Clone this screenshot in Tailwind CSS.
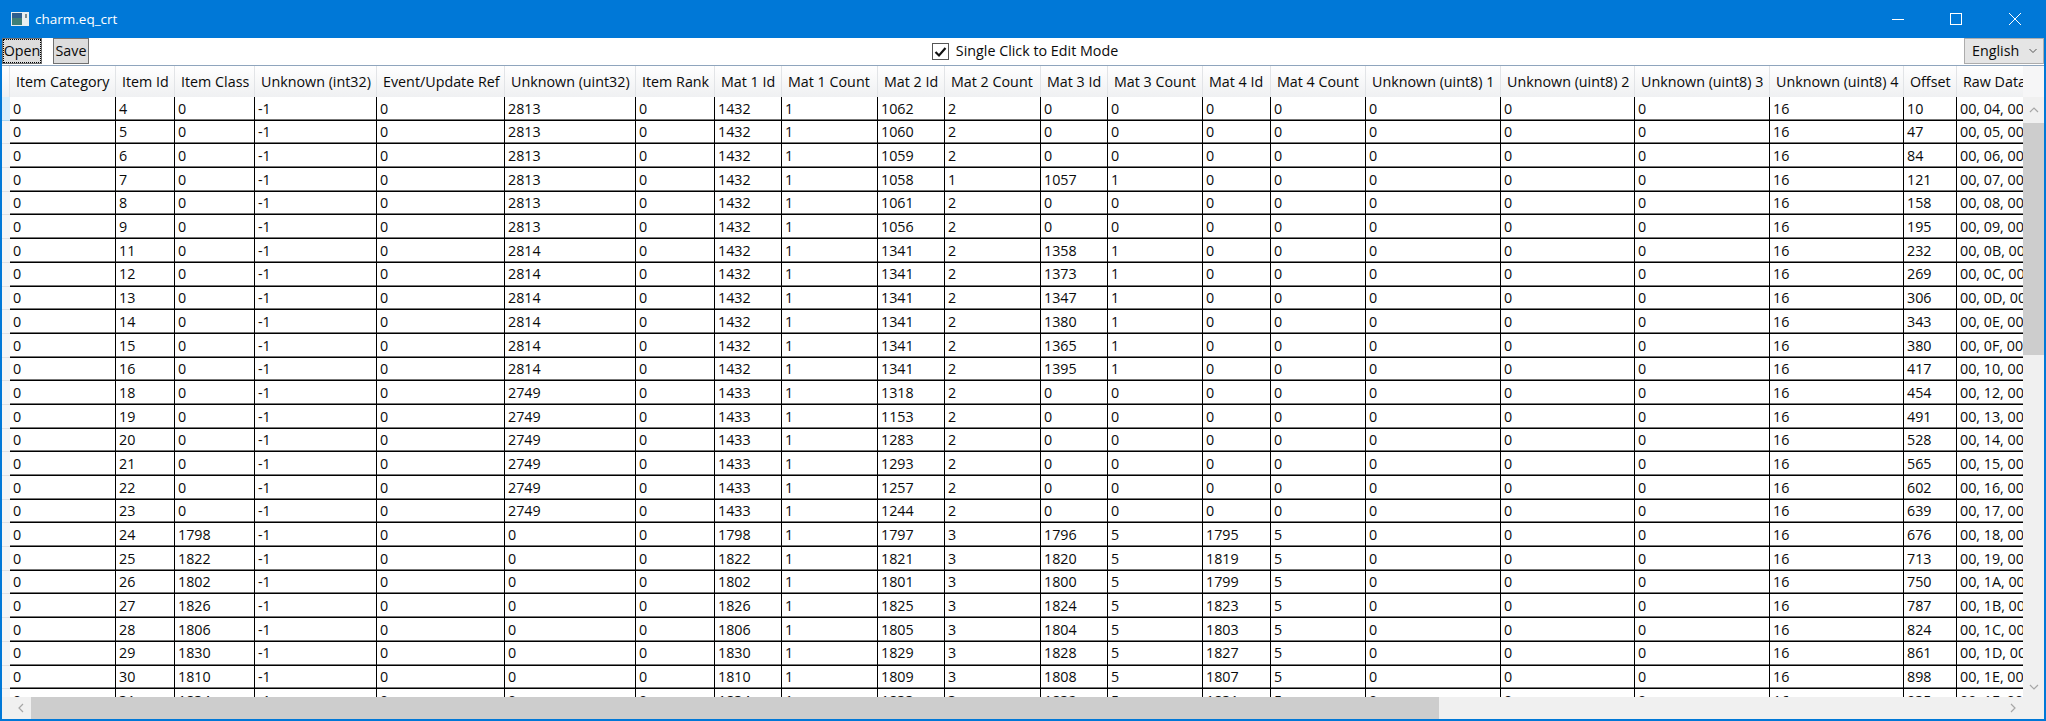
<!DOCTYPE html>
<html lang="en">
<head>
  <meta charset="UTF-8" />
  <title>charm.eq_crt</title>
  <script src="https://cdn.jsdelivr.net/npm/@tailwindcss/browser@4"></script>
</head>
<body class="w-[2046px] h-[721px] overflow-hidden bg-[#0078d7] px-[2px] pb-[2px] flex flex-col font-['Open_Sans','Liberation_Sans',sans-serif] text-[14.3px] text-[#0a0a0a]">
  <!-- title bar -->
  <div class="h-[38px] shrink-0 flex items-center text-white relative">
    <svg class="ml-[9px] w-[18px] h-[14px]" viewBox="0 0 18 14">
      <rect width="18" height="14" fill="#e8eef0" />
      <rect x="1" y="1" width="10" height="12" fill="#3f7f78" />
      <rect x="1" y="1" width="10" height="5" fill="#2f5f8f" />
      <rect x="14" y="2" width="2" height="4" fill="#7a8a90" />
    </svg>
    <span class="ml-[6px] text-[13.5px]">charm.eq_crt</span>
    <div class="ml-auto flex items-center">
      <svg class="w-[58px] h-[14px]" viewBox="0 0 58 14"><path d="M17 7.5h12" stroke="#fff" stroke-width="1" /></svg>
      <svg class="w-[59px] h-[14px]" viewBox="0 0 59 14"><rect x="17.5" y="1.5" width="11" height="11" fill="none" stroke="#fff" /></svg>
      <svg class="w-[52px] h-[14px]" viewBox="0 0 52 14"><path d="M17 1l12 12M29 1L17 13" stroke="#fff" stroke-width="1" fill="none" /></svg>
    </div>
  </div>

  <div class="flex-1 min-h-0 bg-white flex flex-col">
    <!-- toolbar -->
    <div class="h-[28px] shrink-0 flex border-b border-[#8fa5bd] pb-[1px]">
      <div class="w-[400px] flex gap-[11px]">
        <button class="w-[40px] h-[26px] bg-[#dddddd] border border-[#707070] outline-1 outline-dotted outline-black -outline-offset-2">Open</button>
        <button class="w-[36px] h-[26px] bg-[#dddddd] border border-[#707070]">Save</button>
      </div>
      <label class="flex-1 flex items-center justify-center gap-[7px] pl-[4px]">
        <span class="w-[17px] h-[17px] bg-white border border-[#555] flex items-center justify-center">
          <svg class="w-[13px] h-[13px]" viewBox="0 0 13 13"><path d="M1.5 7l3.5 3.5L11.5 3" stroke="#111" stroke-width="2.2" fill="none" /></svg>
        </span>
        <span>Single Click to Edit Mode</span>
      </label>
      <div class="w-[400px] flex justify-end">
        <div class="w-[80px] h-[26px] bg-[#e5e5e5] border border-[#acacac] flex items-center pl-[7px] justify-between pr-[6px]">
          <span>English</span>
          <svg class="w-[8px] h-[6px]" viewBox="0 0 8 6"><path d="M0.5 1l3.5 3.5L7.5 1" stroke="#555" fill="none" /></svg>
        </div>
      </div>
    </div>

    <!-- data grid -->
    <div class="flex-1 min-h-0 flex">
      <div class="w-[2021px] overflow-hidden">
        <table class="table-fixed w-[2155px] border-separate border-spacing-0 whitespace-nowrap [&_th]:h-[31px] [&_th]:font-normal [&_th]:text-left [&_th]:pl-[6px] [&_th]:overflow-hidden [&_th]:border-r [&_th]:border-[#e2e4e7] [&_th]:bg-linear-to-b [&_th]:from-white [&_th]:to-[#eff0f2] [&_tr]:h-[23.7px] [&_td]:pl-[3px] [&_td]:py-0 [&_td]:overflow-hidden [&_td]:border-r [&_td]:border-b [&_td]:border-black [&_td]:shadow-[inset_0_-1px_0_#777] [&_td:first-child]:p-0 [&_td:first-child]:bg-[#f4f5f6] [&_td:first-child]:border-r-0 [&_td:first-child]:border-[#dfe1e4] [&_td:first-child]:shadow-none">
          <colgroup>
            <col class="w-[8px]" /><col class="w-[106px]" /><col class="w-[59px]" /><col class="w-[80px]" /><col class="w-[122px]" /><col class="w-[128px]" /><col class="w-[131px]" /><col class="w-[79px]" /><col class="w-[67px]" /><col class="w-[96px]" /><col class="w-[67px]" /><col class="w-[96px]" /><col class="w-[67px]" /><col class="w-[95px]" /><col class="w-[68px]" /><col class="w-[95px]" /><col class="w-[135px]" /><col class="w-[134px]" /><col class="w-[135px]" /><col class="w-[134px]" /><col class="w-[53px]" /><col class="w-[200px]" />
          </colgroup>
          <thead>
            <tr><th></th><th>Item Category</th><th>Item Id</th><th>Item Class</th><th>Unknown (int32)</th><th>Event/Update Ref</th><th>Unknown (uint32)</th><th>Item Rank</th><th>Mat 1 Id</th><th>Mat 1 Count</th><th>Mat 2 Id</th><th>Mat 2 Count</th><th>Mat 3 Id</th><th>Mat 3 Count</th><th>Mat 4 Id</th><th>Mat 4 Count</th><th>Unknown (uint8) 1</th><th>Unknown (uint8) 2</th><th>Unknown (uint8) 3</th><th>Unknown (uint8) 4</th><th>Offset</th><th>Raw Data</th></tr>
          </thead>
          <tbody>
            <tr><td class="!bg-[#d9eefb] !border-[#a6d4f2]"></td><td>0</td><td>4</td><td>0</td><td>-1</td><td>0</td><td>2813</td><td>0</td><td>1432</td><td>1</td><td>1062</td><td>2</td><td>0</td><td>0</td><td>0</td><td>0</td><td>0</td><td>0</td><td>0</td><td>16</td><td>10</td><td>00, 04, 00</td></tr>
            <tr><td></td><td>0</td><td>5</td><td>0</td><td>-1</td><td>0</td><td>2813</td><td>0</td><td>1432</td><td>1</td><td>1060</td><td>2</td><td>0</td><td>0</td><td>0</td><td>0</td><td>0</td><td>0</td><td>0</td><td>16</td><td>47</td><td>00, 05, 00</td></tr>
            <tr><td></td><td>0</td><td>6</td><td>0</td><td>-1</td><td>0</td><td>2813</td><td>0</td><td>1432</td><td>1</td><td>1059</td><td>2</td><td>0</td><td>0</td><td>0</td><td>0</td><td>0</td><td>0</td><td>0</td><td>16</td><td>84</td><td>00, 06, 00</td></tr>
            <tr><td></td><td>0</td><td>7</td><td>0</td><td>-1</td><td>0</td><td>2813</td><td>0</td><td>1432</td><td>1</td><td>1058</td><td>1</td><td>1057</td><td>1</td><td>0</td><td>0</td><td>0</td><td>0</td><td>0</td><td>16</td><td>121</td><td>00, 07, 00</td></tr>
            <tr><td></td><td>0</td><td>8</td><td>0</td><td>-1</td><td>0</td><td>2813</td><td>0</td><td>1432</td><td>1</td><td>1061</td><td>2</td><td>0</td><td>0</td><td>0</td><td>0</td><td>0</td><td>0</td><td>0</td><td>16</td><td>158</td><td>00, 08, 00</td></tr>
            <tr><td></td><td>0</td><td>9</td><td>0</td><td>-1</td><td>0</td><td>2813</td><td>0</td><td>1432</td><td>1</td><td>1056</td><td>2</td><td>0</td><td>0</td><td>0</td><td>0</td><td>0</td><td>0</td><td>0</td><td>16</td><td>195</td><td>00, 09, 00</td></tr>
            <tr><td></td><td>0</td><td>11</td><td>0</td><td>-1</td><td>0</td><td>2814</td><td>0</td><td>1432</td><td>1</td><td>1341</td><td>2</td><td>1358</td><td>1</td><td>0</td><td>0</td><td>0</td><td>0</td><td>0</td><td>16</td><td>232</td><td>00, 0B, 00</td></tr>
            <tr><td></td><td>0</td><td>12</td><td>0</td><td>-1</td><td>0</td><td>2814</td><td>0</td><td>1432</td><td>1</td><td>1341</td><td>2</td><td>1373</td><td>1</td><td>0</td><td>0</td><td>0</td><td>0</td><td>0</td><td>16</td><td>269</td><td>00, 0C, 00</td></tr>
            <tr><td></td><td>0</td><td>13</td><td>0</td><td>-1</td><td>0</td><td>2814</td><td>0</td><td>1432</td><td>1</td><td>1341</td><td>2</td><td>1347</td><td>1</td><td>0</td><td>0</td><td>0</td><td>0</td><td>0</td><td>16</td><td>306</td><td>00, 0D, 00</td></tr>
            <tr><td></td><td>0</td><td>14</td><td>0</td><td>-1</td><td>0</td><td>2814</td><td>0</td><td>1432</td><td>1</td><td>1341</td><td>2</td><td>1380</td><td>1</td><td>0</td><td>0</td><td>0</td><td>0</td><td>0</td><td>16</td><td>343</td><td>00, 0E, 00</td></tr>
            <tr><td></td><td>0</td><td>15</td><td>0</td><td>-1</td><td>0</td><td>2814</td><td>0</td><td>1432</td><td>1</td><td>1341</td><td>2</td><td>1365</td><td>1</td><td>0</td><td>0</td><td>0</td><td>0</td><td>0</td><td>16</td><td>380</td><td>00, 0F, 00</td></tr>
            <tr><td></td><td>0</td><td>16</td><td>0</td><td>-1</td><td>0</td><td>2814</td><td>0</td><td>1432</td><td>1</td><td>1341</td><td>2</td><td>1395</td><td>1</td><td>0</td><td>0</td><td>0</td><td>0</td><td>0</td><td>16</td><td>417</td><td>00, 10, 00</td></tr>
            <tr><td></td><td>0</td><td>18</td><td>0</td><td>-1</td><td>0</td><td>2749</td><td>0</td><td>1433</td><td>1</td><td>1318</td><td>2</td><td>0</td><td>0</td><td>0</td><td>0</td><td>0</td><td>0</td><td>0</td><td>16</td><td>454</td><td>00, 12, 00</td></tr>
            <tr><td></td><td>0</td><td>19</td><td>0</td><td>-1</td><td>0</td><td>2749</td><td>0</td><td>1433</td><td>1</td><td>1153</td><td>2</td><td>0</td><td>0</td><td>0</td><td>0</td><td>0</td><td>0</td><td>0</td><td>16</td><td>491</td><td>00, 13, 00</td></tr>
            <tr><td></td><td>0</td><td>20</td><td>0</td><td>-1</td><td>0</td><td>2749</td><td>0</td><td>1433</td><td>1</td><td>1283</td><td>2</td><td>0</td><td>0</td><td>0</td><td>0</td><td>0</td><td>0</td><td>0</td><td>16</td><td>528</td><td>00, 14, 00</td></tr>
            <tr><td></td><td>0</td><td>21</td><td>0</td><td>-1</td><td>0</td><td>2749</td><td>0</td><td>1433</td><td>1</td><td>1293</td><td>2</td><td>0</td><td>0</td><td>0</td><td>0</td><td>0</td><td>0</td><td>0</td><td>16</td><td>565</td><td>00, 15, 00</td></tr>
            <tr><td></td><td>0</td><td>22</td><td>0</td><td>-1</td><td>0</td><td>2749</td><td>0</td><td>1433</td><td>1</td><td>1257</td><td>2</td><td>0</td><td>0</td><td>0</td><td>0</td><td>0</td><td>0</td><td>0</td><td>16</td><td>602</td><td>00, 16, 00</td></tr>
            <tr><td></td><td>0</td><td>23</td><td>0</td><td>-1</td><td>0</td><td>2749</td><td>0</td><td>1433</td><td>1</td><td>1244</td><td>2</td><td>0</td><td>0</td><td>0</td><td>0</td><td>0</td><td>0</td><td>0</td><td>16</td><td>639</td><td>00, 17, 00</td></tr>
            <tr><td></td><td>0</td><td>24</td><td>1798</td><td>-1</td><td>0</td><td>0</td><td>0</td><td>1798</td><td>1</td><td>1797</td><td>3</td><td>1796</td><td>5</td><td>1795</td><td>5</td><td>0</td><td>0</td><td>0</td><td>16</td><td>676</td><td>00, 18, 00</td></tr>
            <tr><td></td><td>0</td><td>25</td><td>1822</td><td>-1</td><td>0</td><td>0</td><td>0</td><td>1822</td><td>1</td><td>1821</td><td>3</td><td>1820</td><td>5</td><td>1819</td><td>5</td><td>0</td><td>0</td><td>0</td><td>16</td><td>713</td><td>00, 19, 00</td></tr>
            <tr><td></td><td>0</td><td>26</td><td>1802</td><td>-1</td><td>0</td><td>0</td><td>0</td><td>1802</td><td>1</td><td>1801</td><td>3</td><td>1800</td><td>5</td><td>1799</td><td>5</td><td>0</td><td>0</td><td>0</td><td>16</td><td>750</td><td>00, 1A, 00</td></tr>
            <tr><td></td><td>0</td><td>27</td><td>1826</td><td>-1</td><td>0</td><td>0</td><td>0</td><td>1826</td><td>1</td><td>1825</td><td>3</td><td>1824</td><td>5</td><td>1823</td><td>5</td><td>0</td><td>0</td><td>0</td><td>16</td><td>787</td><td>00, 1B, 00</td></tr>
            <tr><td></td><td>0</td><td>28</td><td>1806</td><td>-1</td><td>0</td><td>0</td><td>0</td><td>1806</td><td>1</td><td>1805</td><td>3</td><td>1804</td><td>5</td><td>1803</td><td>5</td><td>0</td><td>0</td><td>0</td><td>16</td><td>824</td><td>00, 1C, 00</td></tr>
            <tr><td></td><td>0</td><td>29</td><td>1830</td><td>-1</td><td>0</td><td>0</td><td>0</td><td>1830</td><td>1</td><td>1829</td><td>3</td><td>1828</td><td>5</td><td>1827</td><td>5</td><td>0</td><td>0</td><td>0</td><td>16</td><td>861</td><td>00, 1D, 00</td></tr>
            <tr><td></td><td>0</td><td>30</td><td>1810</td><td>-1</td><td>0</td><td>0</td><td>0</td><td>1810</td><td>1</td><td>1809</td><td>3</td><td>1808</td><td>5</td><td>1807</td><td>5</td><td>0</td><td>0</td><td>0</td><td>16</td><td>898</td><td>00, 1E, 00</td></tr>
            <tr><td></td><td>0</td><td>31</td><td>1834</td><td>-1</td><td>0</td><td>0</td><td>0</td><td>1834</td><td>1</td><td>1833</td><td>3</td><td>1832</td><td>5</td><td>1831</td><td>5</td><td>0</td><td>0</td><td>0</td><td>16</td><td>935</td><td>00, 1F, 00</td></tr>
          </tbody>
        </table>
      </div>
      <!-- vertical scrollbar -->
      <div class="w-[21px] flex flex-col bg-[#f0f0f0]">
        <div class="h-[31px] bg-[#f6f6f7]"></div>
        <div class="h-[26px] flex items-center justify-center">
          <svg class="w-[10px] h-[6px]" viewBox="0 0 10 6"><path d="M1 5l4-4 4 4" stroke="#a6a6a6" stroke-width="1.2" fill="none" /></svg>
        </div>
        <div class="h-[232px] bg-[#cdcdcd]"></div>
        <div class="mt-auto h-[21px] flex items-center justify-center">
          <svg class="w-[10px] h-[6px]" viewBox="0 0 10 6"><path d="M1 1l4 4 4-4" stroke="#a6a6a6" stroke-width="1.2" fill="none" /></svg>
        </div>
      </div>
    </div>

    <!-- horizontal scrollbar -->
    <div class="h-[22px] shrink-0 bg-[#f0f0f0] flex items-center pl-[8px]">
      <div class="w-[21px] h-full flex items-center justify-center">
        <svg class="w-[6px] h-[10px]" viewBox="0 0 6 10"><path d="M5 1L1 5l4 4" stroke="#a6a6a6" stroke-width="1.2" fill="none" /></svg>
      </div>
      <div class="w-[1408px] h-full bg-[#cdcdcd]"></div>
      <div class="w-[21px] h-full ml-auto mr-[21px] flex items-center justify-center">
        <svg class="w-[6px] h-[10px]" viewBox="0 0 6 10"><path d="M1 1l4 4-4 4" stroke="#a6a6a6" stroke-width="1.2" fill="none" /></svg>
      </div>
    </div>
  </div>
</body>
</html>
